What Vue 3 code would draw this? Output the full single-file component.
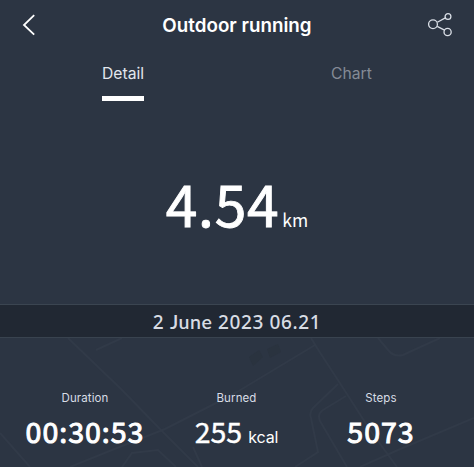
<script setup>
const stats = [
  { key: 'duration', label: 'Duration', value: '00:30:53' },
  { key: 'burned', label: 'Burned', value: '255', unit: 'kcal' },
  { key: 'steps', label: 'Steps', value: '5073' },
]
</script>

<template>
  <main class="screen">
    <header class="header">
      <svg class="back" width="14" height="22" viewBox="0 0 14 22">
        <path d="M12.2 1.2 L2 11 L12.2 20.7" />
      </svg>
      <h1 class="title">Outdoor running</h1>
      <svg class="share" width="26" height="26" viewBox="0 0 26 26">
        <path d="M9.3 10.2 L17.4 5.9 M9.2 14.3 L17 18.4" />
        <circle cx="5" cy="12.3" r="4.4" />
        <circle cx="20" cy="4.5" r="2.9" />
        <circle cx="19.6" cy="20" r="3.6" />
      </svg>
    </header>
    <nav class="tabs">
      <span class="tab active">Detail</span>
      <span class="tab">Chart</span>
    </nav>
    <section class="distance">
      <span class="amount">4.54</span><span class="unit">km</span>
    </section>
    <div class="date">2 <span class="month">June</span> 2023 06.21</div>
    <section class="summary">
      <svg class="map" width="474" height="129" viewBox="0 0 474 129">
        <path d="M68 0 L121 51 L160 91 L198 129 M96 12 L122 0 M0 95 L30 129 M70 129 L112 112 L165 91 L218 64 L237 54 L315 7 M311 0 L319 13 L347 56 L370 92 L397 129 M338 46 L313 70 Q309 74 311 80 L318 114 L295 129 M346 58 L323 72 Q317 76 320 83 L347 129 M378 0 L389 13 Q394 19 403 17 L440 0 M360 129 L398 112 L474 80 M122 129 L132 115 L158 112 L176 129 M193 109 L202 129" />
        <path class="block" d="M249 19 L259 12 L263 19 L253 28 Z M267 11 L278 6 L281 14 L270 20 Z" />
      </svg>
      <div v-for="s in stats" :key="s.key" class="stat" :class="s.key">
        <span class="label">{{ s.label }}</span>
        <span class="value">{{ s.value }}<small v-if="s.unit">{{ s.unit }}</small></span>
      </div>
    </section>
  </main>
</template>

<style>
body {
  margin: 0;
  background: #2c3543;
}
</style>

<style scoped>
.screen {
  display: flex;
  flex-direction: column;
  width: 474px;
  height: 467px;
  overflow: hidden;
  background: #2c3543;
  color: #fff;
  font-family: Inter, sans-serif;
}
.header {
  display: flex;
  align-items: center;
  justify-content: space-between;
  height: 50px;
  padding: 0 20px 0 22px;
}
svg {
  fill: none;
  stroke: #fff;
}
.back {
  stroke-width: 1.8;
}
.share {
  stroke: #d9dee6;
  stroke-width: 1.3;
}
.title {
  margin: 2px 0 0 10px;
  font-size: 18.8px;
  font-weight: 600;
  line-height: 24px;
}
.tabs {
  display: grid;
  grid-template-columns: 232px 225px;
  justify-items: center;
  height: 60px;
  padding: 12px 0 0 7px;
  box-sizing: border-box;
}
.tab {
  height: 39px;
  box-sizing: border-box;
  font-size: 15.7px;
  line-height: 24px;
  color: #858b96;
}
.tab.active {
  border-bottom: 5px solid #fff;
  color: #e3e7ee;
}
.distance {
  display: flex;
  align-items: baseline;
  justify-content: center;
  height: 194px;
  padding-top: 52px;
  box-sizing: border-box;
  line-height: 80px;
  font-family: "Noto Sans CJK SC", sans-serif;
}
.amount {
  font-size: 57px;
  letter-spacing: 0.7px;
  -webkit-text-stroke: 0.9px #fff;
}
.distance .unit {
  margin-left: 3px;
  font-size: 17.5px;
}
.date {
  height: 34px;
  box-sizing: border-box;
  border-top: 1px solid #3b4551;
  border-bottom: 1px solid #39434f;
  background: #212833;
  color: #d8dce4;
  font-family: "Noto Sans", sans-serif;
  font-size: 19px;
  font-weight: 500;
  letter-spacing: 0.6px;
  line-height: 33px;
  text-align: center;
}
.month {
  font-family: Lato, sans-serif;
  font-size: 19.5px;
  font-weight: 600;
}
.summary {
  display: grid;
  grid-template-columns: 170px 133px 156px;
  flex: 1;
}
.map {
  grid-area: 1 / 1 / 2 / 4;
  stroke: #313a48;
  stroke-width: 2;
}
.map .block {
  fill: #2a333f;
  stroke: none;
}
.stat {
  grid-row: 1;
  display: flex;
  flex-direction: column;
  align-items: center;
  padding-top: 50px;
}
.duration { grid-column: 1; }
.burned { grid-column: 2; }
.steps { grid-column: 3; }
.label {
  font-size: 11.5px;
  letter-spacing: 0.1px;
  line-height: 20px;
  color: #d8dde6;
}
.value {
  margin-top: 3px;
  font-family: "Noto Sans CJK SC", sans-serif;
  font-size: 28.5px;
  letter-spacing: 1px;
  line-height: 40px;
  white-space: nowrap;
  -webkit-text-stroke: 1px #fff;
}
.burned .value {
  letter-spacing: 0;
  -webkit-text-stroke: 0.4px #fff;
}
.value small {
  margin-left: 6px;
  font-family: Inter, sans-serif;
  font-size: 16px;
  letter-spacing: -0.1px;
  -webkit-text-stroke: 0;
}
</style>
